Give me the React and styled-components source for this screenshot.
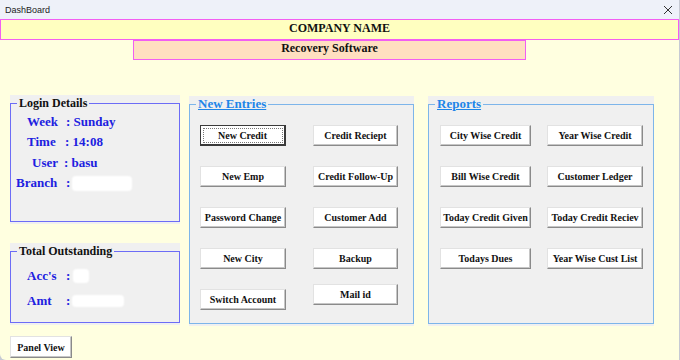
import React from "react";
import styled, { createGlobalStyle, css } from "styled-components";

const GlobalStyle = createGlobalStyle`
  html, body { margin: 0; padding: 0; background: #c6cad4; }
  body { font-family: "Liberation Serif", "Times New Roman", serif; }
`;

const Window = styled.div`
  width: 679px;
  height: 360px;
  background: #ffffe0;
  display: flex;
  flex-direction: column;
  border-bottom-left-radius: 6px;
  overflow: hidden;
`;

const TitleBar = styled.div`
  height: 19px;
  flex: none;
  background: #eef1f9;
  display: flex;
  align-items: center;
  justify-content: space-between;
  padding: 0 6px 0 5px;
  font: 9px "Liberation Sans", Arial, sans-serif;
  color: #222;
`;

const CompanyBar = styled.div`
  box-sizing: border-box;
  height: 21px;
  flex: none;
  border: 1px solid #f25ef2;
  background: #ffffc0;
  text-align: center;
  font-weight: bold;
  font-size: 12px;
  line-height: 16px;
  color: #111;
`;

const SubBar = styled.div`
  box-sizing: border-box;
  margin-left: 133px;
  width: 393px;
  height: 20px;
  flex: none;
  border: 1px solid #f25ef2;
  background: #ffdfc0;
  text-align: center;
  font-weight: bold;
  font-size: 12px;
  line-height: 15px;
  color: #111;
`;

const Content = styled.div`
  display: flex;
  align-items: flex-start;
  padding: 35px 0 0 10px;
`;

const Column = styled.div`
  display: flex;
  flex-direction: column;
  align-items: flex-start;
  margin-left: ${(p) => p.$ml || 0}px;
  margin-top: ${(p) => p.$mt || 0}px;
`;

const GroupPanel = styled.div`
  box-sizing: border-box;
  background: #f0f0f0;
  width: ${(p) => p.$w}px;
  height: ${(p) => p.$h}px;
  margin-top: ${(p) => p.$mt || 0}px;
  padding-bottom: 2px;
`;

const Frame = styled.fieldset`
  box-sizing: border-box;
  margin: 0;
  padding: 0;
  min-width: 0;
  height: 100%;
  border: 1px solid ${(p) => p.$color};
`;

const Legend = styled.legend`
  margin-left: 6px;
  padding: 0 2px;
  font-weight: bold;
  font-size: ${(p) => p.$size || 12}px;
  line-height: 16px;
  color: ${(p) => p.$color || "#111"};
  text-decoration: ${(p) => (p.$underline ? "underline" : "none")};
`;

const InfoList = styled.div`
  padding-top: ${(p) => p.$pt}px;
  display: flex;
  flex-direction: column;
`;

const InfoRow = styled.div`
  display: flex;
  align-items: center;
  height: ${(p) => p.$h}px;
  font-weight: bold;
  font-size: 13px;
  color: #2020e0;
  white-space: pre;
`;

const InfoLabel = styled.span`
  box-sizing: border-box;
  display: inline-block;
  width: ${(p) => p.$w}px;
  padding-left: ${(p) => p.$indent}px;
`;

const Hidden = styled.span`
  display: inline-block;
  width: ${(p) => p.$w}px;
  height: ${(p) => p.$h}px;
  margin-left: ${(p) => p.$ml}px;
  background: #fff;
  border-radius: 3px;
  box-shadow: 0 0 2px 1px #fff;
`;

const ButtonGrid = styled.div`
  display: grid;
  grid-template-columns: ${(p) => p.$cols};
  column-gap: ${(p) => p.$gap}px;
  row-gap: 20px;
  padding: 13px 0 0 ${(p) => p.$pl}px;
  align-items: start;
`;

const Btn = styled.button`
  box-sizing: border-box;
  height: ${(p) => p.$h || 21}px;
  width: ${(p) => (p.$w ? `${p.$w}px` : "auto")};
  padding: 0;
  background: #fff;
  border: 1px solid;
  border-color: #e2e2e2 #8a8a8a #8a8a8a #e2e2e2;
  box-shadow: inset -1px -1px 0 #c6c6c6;
  font-family: "Liberation Serif", "Times New Roman", serif;
  font-weight: bold;
  font-size: 10px;
  color: #111;
  white-space: nowrap;
  ${(p) =>
    p.$focused &&
    css`
      border-color: #3a3a3a;
      border-width: 1px 2px 2px 1px;
      box-shadow: none;
      outline: 1px dotted #777;
      outline-offset: -4px;
    `}
  ${(p) =>
    p.$raise &&
    css`
      margin-top: -5px;
    `}
`;

const CloseIcon = () => (
  <svg width="10" height="10" viewBox="0 0 10 10">
    <path d="M1 1 L9 9 M9 1 L1 9" stroke="#333" strokeWidth="1" fill="none" />
  </svg>
);

const entries = [
  { t: "New Credit", focused: true },
  { t: "Credit Reciept" },
  { t: "New Emp" },
  { t: "Credit Follow-Up" },
  { t: "Password Change" },
  { t: "Customer Add" },
  { t: "New City" },
  { t: "Backup" },
  { t: "Switch Account" },
  { t: "Mail id", raise: true },
];

const reports = [
  "City Wise Credit",
  "Year Wise Credit",
  "Bill Wise Credit",
  "Customer Ledger",
  "Today Credit Given",
  "Today Credit Reciev",
  "Todays Dues",
  "Year Wise Cust List",
];

export default function App() {
  return (
    <>
      <GlobalStyle />
      <Window>
        <TitleBar>
          <span>DashBoard</span>
          <CloseIcon />
        </TitleBar>
        <CompanyBar>COMPANY NAME</CompanyBar>
        <SubBar>Recovery Software</SubBar>
        <Content>
          <Column>
            <GroupPanel $w={170} $h={129}>
              <Frame $color="#6c6cf6">
                <Legend>Login Details</Legend>
                <InfoList $pt={1}>
                  <InfoRow $h={20}>
                    <InfoLabel $w={55} $indent={16}>Week</InfoLabel>: Sunday
                  </InfoRow>
                  <InfoRow $h={20}>
                    <InfoLabel $w={54} $indent={16}>Time</InfoLabel>: 14:08
                  </InfoRow>
                  <InfoRow $h={21}>
                    <InfoLabel $w={53} $indent={21}>User</InfoLabel>: basu
                  </InfoRow>
                  <InfoRow $h={20}>
                    <InfoLabel $w={55} $indent={5}>Branch</InfoLabel>:
                    <Hidden $w={58} $h={13} $ml={3} />
                  </InfoRow>
                </InfoList>
              </Frame>
            </GroupPanel>
            <GroupPanel $w={170} $h={82} $mt={19}>
              <Frame $color="#6c6cf6">
                <Legend>Total Outstanding</Legend>
                <InfoList $pt={4}>
                  <InfoRow $h={25}>
                    <InfoLabel $w={55} $indent={16}>Acc's</InfoLabel>:
                    <Hidden $w={14} $h={12} $ml={4} />
                  </InfoRow>
                  <InfoRow $h={25}>
                    <InfoLabel $w={55} $indent={16}>Amt</InfoLabel>:
                    <Hidden $w={50} $h={10} $ml={3} />
                  </InfoRow>
                </InfoList>
              </Frame>
            </GroupPanel>
            <Btn $w={62} $h={22} style={{ marginTop: 11 }}>
              Panel View
            </Btn>
          </Column>
          <Column $ml={9} $mt={1}>
            <GroupPanel $w={225} $h={230}>
              <Frame $color="#7db5ea">
                <Legend $size={13} $color="#1f86e8" $underline>
                  New Entries
                </Legend>
                <ButtonGrid $cols="86px 85px" $gap={27} $pl={10}>
                  {entries.map((e) => (
                    <Btn key={e.t} $focused={e.focused} $raise={e.raise}>
                      {e.t}
                    </Btn>
                  ))}
                </ButtonGrid>
              </Frame>
            </GroupPanel>
          </Column>
          <Column $ml={14} $mt={1}>
            <GroupPanel $w={226} $h={230}>
              <Frame $color="#7db5ea">
                <Legend $size={13} $color="#1f86e8" $underline>
                  Reports
                </Legend>
                <ButtonGrid $cols="91px 96px" $gap={16} $pl={11}>
                  {reports.map((r) => (
                    <Btn key={r}>{r}</Btn>
                  ))}
                </ButtonGrid>
              </Frame>
            </GroupPanel>
          </Column>
        </Content>
      </Window>
    </>
  );
}
